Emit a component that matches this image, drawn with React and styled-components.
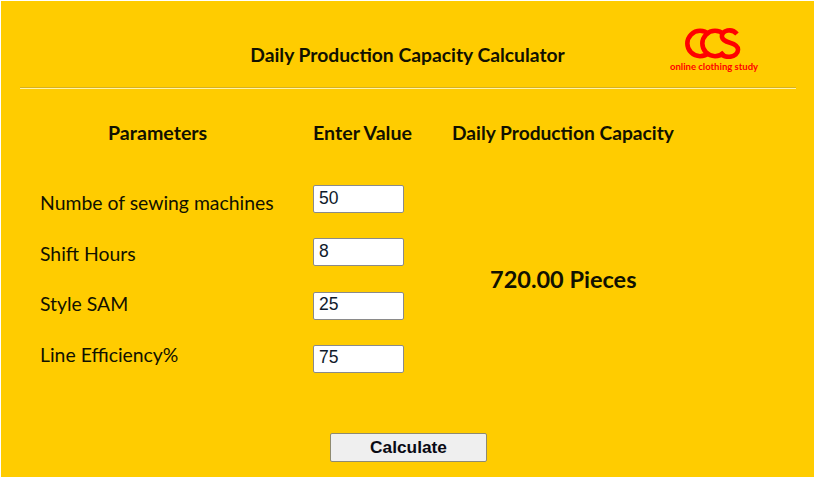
import React from 'react';
import styled, { createGlobalStyle } from 'styled-components';

const rows = [
  { id: 'machines', label: 'Numbe of sewing machines', value: '50' },
  { id: 'hours', label: 'Shift Hours', value: '8' },
  { id: 'sam', label: 'Style SAM', value: '25' },
  { id: 'efficiency', label: 'Line Efficiency%', value: '75' },
];

const App = () => (
  <Page>
    <GlobalStyle />
    <Header>
      <Title>Daily Production Capacity Calculator</Title>
      <Logo>
        <svg width="58" height="31" viewBox="0 0 58 31" fill="none" stroke="#ff0000" strokeWidth="4.6">
          <path d="M25 6.500A12.700 12.700 0 1 0 25 24.500" />
          <path d="M40 6.500A12.700 12.700 0 1 0 40 24.500" />
          <path d="M53 6C50 2.600 46 2 43.500 2.600C39.500 3.500 37.500 6 38 9C38.600 12.500 42.500 13.800 46 14.800C50 16 53.800 17.500 54 21.500C54.200 25.500 50.500 28.600 45.500 28.800C42 29 38.500 28 36 25" />
        </svg>
        <LogoText>online clothing study</LogoText>
      </Logo>
    </Header>
    <Divider />
    <Columns>
      <ParamHead>Parameters</ParamHead>
      <ValueHead>Enter Value</ValueHead>
      <ResultHead>Daily Production Capacity</ResultHead>
      <LabelList>
        {rows.map(row => (
          <RowLabel key={row.id} htmlFor={row.id}>{row.label}</RowLabel>
        ))}
      </LabelList>
      <InputList>
        {rows.map(row => (
          <ValueInput key={row.id} id={row.id} defaultValue={row.value} />
        ))}
      </InputList>
      <Result>720.00 Pieces</Result>
    </Columns>
    <Footer>
      <CalcButton type="button">Calculate</CalcButton>
    </Footer>
  </Page>
);

const GlobalStyle = createGlobalStyle`
  html, body {
    margin: 0;
    padding: 0;
    background: #ffffff;
  }
`;

const Page = styled.div`
  box-sizing: border-box;
  width: 814px;
  height: 477px;
  overflow: hidden;
  padding: 1px 0 0 1px;
  background: #ffcc00 content-box;
  font-family: Lato, "Liberation Sans", sans-serif;
  color: #111100;
`;

const Header = styled.div`
  position: relative;
  display: flex;
  justify-content: center;
  height: 86px;
`;

const Title = styled.h1`
  margin: 42px 0 0;
  font-size: 19.300px;
  line-height: 24px;
  font-weight: 700;
`;

const Logo = styled.div`
  position: absolute;
  top: 27px;
  left: 668px;
  width: 90px;
  display: flex;
  flex-direction: column;
  align-items: center;

  svg {
    margin-left: -3px;
  }
`;

const LogoText = styled.div`
  margin-top: 2px;
  font-size: 9.500px;
  line-height: 11px;
  font-weight: 700;
  color: #ff0000;
  white-space: nowrap;
`;

const Divider = styled.div`
  height: 1px;
  margin: 0 18px 0 19px;
  background: #fff2a8;
  border-top: 1px solid #d6b020;
`;

const Columns = styled.div`
  display: grid;
  grid-template-columns: 293px 151px 1fr;
  grid-template-rows: 28px auto;
  padding: 30px 0 0 19px;
`;

const Head = styled.div`
  font-size: 19.600px;
  line-height: 28px;
  font-weight: 700;
  white-space: nowrap;
`;

const ParamHead = styled(Head)`
  padding-left: 88px;
`;

const ValueHead = styled(Head)``;

const ResultHead = styled(Head)`
  margin-left: -12px;
  font-size: 19.200px;
`;

const LabelList = styled.div`
  display: flex;
  flex-direction: column;
  gap: 26.670px;
  margin-top: 44px;
  padding-left: 20px;
`;

const RowLabel = styled.label`
  font-size: 19.400px;
  line-height: 24px;
  white-space: nowrap;
`;

const InputList = styled.div`
  display: flex;
  flex-direction: column;
  gap: 25.300px;
  margin-top: 38px;
`;

const ValueInput = styled.input`
  box-sizing: border-box;
  width: 91px;
  height: 28px;
  padding: 0 5px 2px;
  border: 1px solid #8a8a8a;
  border-radius: 2px;
  background: #ffffff;
  font-family: "Liberation Sans", Arial, sans-serif;
  font-size: 17.500px;
  color: #0f1a2b;
`;

const Result = styled.div`
  align-self: center;
  margin: 38px 0 0 26px;
  font-size: 23.500px;
  font-weight: 700;
  white-space: nowrap;
`;

const Footer = styled.div`
  display: flex;
  justify-content: center;
  margin-top: 60px;
  padding-left: 2px;
`;

const CalcButton = styled.button`
  box-sizing: border-box;
  width: 157px;
  height: 29px;
  padding: 0;
  border: 1px solid #8f8a70;
  border-radius: 2px;
  background: #efefef;
  font-family: "Liberation Sans", Arial, sans-serif;
  font-size: 17.300px;
  font-weight: 700;
  color: #0a0a14;
`;

export default App;
